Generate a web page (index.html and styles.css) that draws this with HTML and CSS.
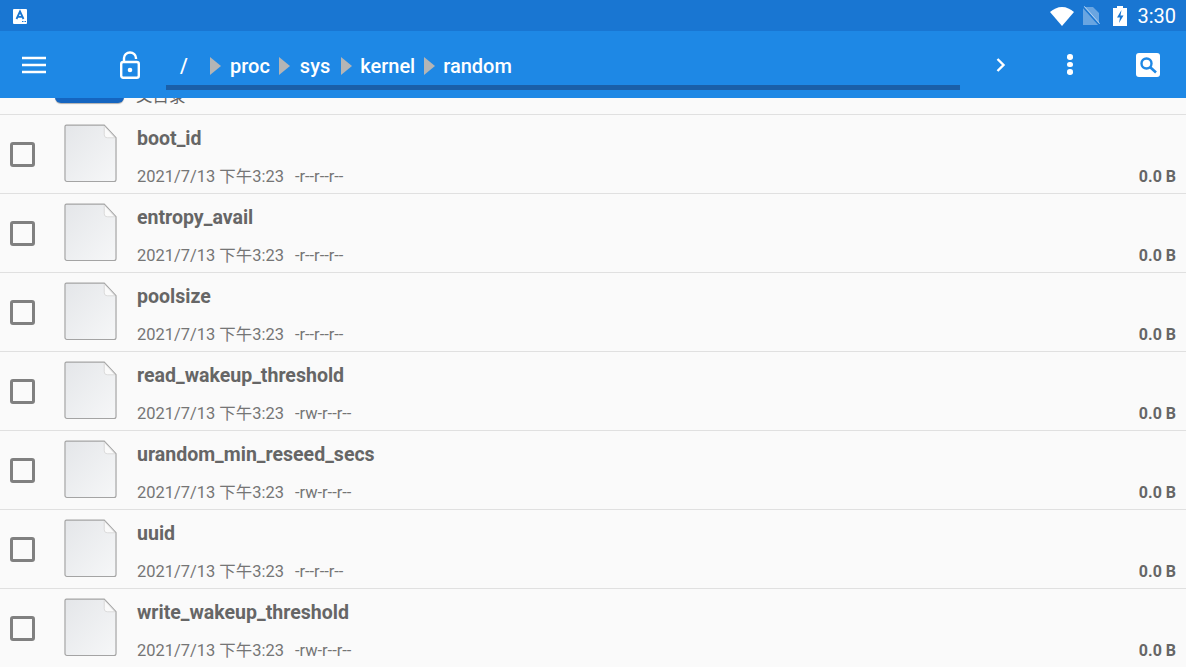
FILE: index.html

```html
<!DOCTYPE html>
<html lang="zh">
<head>
    <meta charset="UTF-8" />
    <meta name="viewport" content="width=device-width, initial-scale=1" />
    <title>random</title>
    <link rel="stylesheet" href="styles.css">
</head>
<body>
    <div class="status-bar">
        <svg class="app-icon" width="16" height="16" viewBox="0 0 16 16">
            <rect x="1" y="1" width="14" height="15" rx="1" fill="#fff"/>
            <path d="M4.500 11 8 3.500l3.500 7.500M5.700 8.800h4.600" fill="none" stroke="#1976d2" stroke-width="1.800"/>
            <path d="M10 13.500h4" stroke="#1976d2" stroke-width="1" stroke-dasharray="1 .5"/>
        </svg>
        <div class="status-right">
            <svg width="24" height="20" viewBox="0 0 24 20"><path d="M0 6C3.500 3 7.500 1 12 1s8.500 2 12 5L12 20z" fill="#fff"/></svg>
            <svg class="sim-icon" width="18" height="20" viewBox="0 0 18 20">
                <path d="M1 1h10l6 6v12H1z" fill="#fff" opacity="0.35"/>
                <path d="M1 1 18 20" stroke="#1976d2" stroke-width="1.500"/>
                <path d="M2 0 18.500 18.500" stroke="#fff" stroke-width="1" opacity="0.5"/>
            </svg>
            <svg class="battery-icon" width="14" height="20" viewBox="0 0 14 20">
                <path d="M4 0h6v2h4v18H0V2h4z" fill="#fff"/>
                <path d="M8.500 4 4 11.500h3L6 17l4.500-7.500h-3z" fill="#1976d2"/>
            </svg>
            <span class="clock">3:30</span>
        </div>
    </div>

    <div class="toolbar">
        <svg class="menu-icon" width="24" height="18" viewBox="0 0 24 18">
            <path d="M0 2h24M0 9h24M0 16h24" stroke="#fff" stroke-width="2.600"/>
        </svg>
        <svg class="lock-icon" width="22" height="28" viewBox="0 0 22 28">
            <rect x="2.200" y="11" width="17.600" height="15.800" rx="2" fill="none" stroke="#fff" stroke-width="2.400"/>
            <path d="M5 11V7a6 5.500 0 0 1 12 0v1" fill="none" stroke="#fff" stroke-width="2.400"/>
            <circle cx="11" cy="19" r="2.300" fill="#fff"/>
        </svg>
        <div class="crumbs">
            <span class="crumb root">/</span>
            <span class="sep"></span>
            <span class="crumb proc">proc</span>
            <span class="sep"></span>
            <span class="crumb sys">sys</span>
            <span class="sep"></span>
            <span class="crumb">kernel</span>
            <span class="sep"></span>
            <span class="crumb">random</span>
        </div>
        <svg class="chevron" width="12" height="16" viewBox="0 0 12 16">
            <path d="M2.500 2 8.500 8l-6 6" fill="none" stroke="#fff" stroke-width="2.400"/>
        </svg>
        <div class="dots"><i></i><i></i><i></i></div>
        <svg class="search-icon" width="24" height="24" viewBox="0 0 24 24">
            <rect width="24" height="24" rx="3" fill="#fff"/>
            <circle cx="10.500" cy="10.500" r="5" fill="none" stroke="#1e88e5" stroke-width="2.400"/>
            <path d="m14 14 6 5.500" stroke="#1e88e5" stroke-width="2.600"/>
        </svg>
    </div>

    <div class="list">
        <div class="row-cut">
            <div class="folder"></div>
            <span class="cut-text">父目录</span>
        </div>

        <div class="row">
            <span class="check"></span>
            <svg class="file" width="53" height="59" viewBox="0 0 54 60"><use href="#file-shape"/></svg>
            <div class="info">
                <div class="name">boot_id</div>
                <div class="meta"><span>2021/7/13 下午3:23</span><span class="perm">-r--r--r--</span><span class="size">0.0 B</span></div>
            </div>
        </div>
        <div class="row">
            <span class="check"></span>
            <svg class="file" width="53" height="59" viewBox="0 0 54 60"><use href="#file-shape"/></svg>
            <div class="info">
                <div class="name">entropy_avail</div>
                <div class="meta"><span>2021/7/13 下午3:23</span><span class="perm">-r--r--r--</span><span class="size">0.0 B</span></div>
            </div>
        </div>
        <div class="row">
            <span class="check"></span>
            <svg class="file" width="53" height="59" viewBox="0 0 54 60"><use href="#file-shape"/></svg>
            <div class="info">
                <div class="name">poolsize</div>
                <div class="meta"><span>2021/7/13 下午3:23</span><span class="perm">-r--r--r--</span><span class="size">0.0 B</span></div>
            </div>
        </div>
        <div class="row">
            <span class="check"></span>
            <svg class="file" width="53" height="59" viewBox="0 0 54 60"><use href="#file-shape"/></svg>
            <div class="info">
                <div class="name">read_wakeup_threshold</div>
                <div class="meta"><span>2021/7/13 下午3:23</span><span class="perm">-rw-r--r--</span><span class="size">0.0 B</span></div>
            </div>
        </div>
        <div class="row">
            <span class="check"></span>
            <svg class="file" width="53" height="59" viewBox="0 0 54 60"><use href="#file-shape"/></svg>
            <div class="info">
                <div class="name">urandom_min_reseed_secs</div>
                <div class="meta"><span>2021/7/13 下午3:23</span><span class="perm">-rw-r--r--</span><span class="size">0.0 B</span></div>
            </div>
        </div>
        <div class="row">
            <span class="check"></span>
            <svg class="file" width="53" height="59" viewBox="0 0 54 60"><use href="#file-shape"/></svg>
            <div class="info">
                <div class="name">uuid</div>
                <div class="meta"><span>2021/7/13 下午3:23</span><span class="perm">-r--r--r--</span><span class="size">0.0 B</span></div>
            </div>
        </div>
        <div class="row">
            <span class="check"></span>
            <svg class="file" width="53" height="59" viewBox="0 0 54 60"><use href="#file-shape"/></svg>
            <div class="info">
                <div class="name">write_wakeup_threshold</div>
                <div class="meta"><span>2021/7/13 下午3:23</span><span class="perm">-rw-r--r--</span><span class="size">0.0 B</span></div>
            </div>
        </div>
    </div>

    <svg class="defs" width="0" height="0">
        <defs>
            <linearGradient id="file-fill" x1="0" y1="0" x2="1" y2="1">
                <stop offset="0" stop-color="#e4e6e9"/>
                <stop offset="1" stop-color="#f6f7f8"/>
            </linearGradient>
            <g id="file-shape">
                <path d="M2.500 1h38.500L53 14v42.500a2 2 0 0 1-2 2H3a2 2 0 0 1-2-2V2.500A1.500 1.500 0 0 1 2.500 1z" fill="url(#file-fill)" stroke="#a4a4a4" stroke-width="1.200"/>
                <path d="M41 2v9a3 3 0 0 0 3 3h8z" fill="#fafafa" stroke="#dadada"/>
            </g>
        </defs>
    </svg>
</body>
</html>
```

FILE: styles.css

```css
html, body { margin: 0; padding: 0; height: 667px; overflow: hidden; }
body { font-family: Roboto, "Noto Sans CJK SC", sans-serif; background: #fafafa; width: 1186px; }
svg { display: block; flex: none; }
.defs { position: absolute; }

.status-bar { height: 31px; background: #1976d2; display: flex; align-items: center; justify-content: space-between; padding: 0 10px 0 12px; box-sizing: border-box; }
.status-right { display: flex; align-items: center; }
.sim-icon { margin-left: 8px; }
.battery-icon { margin-left: 13px; }
.clock { color: #fff; font-size: 20px; margin-left: 10px; }

.toolbar { height: 67px; background: #1e88e5; display: flex; align-items: center; box-sizing: border-box; }
.menu-icon { margin-left: 22px; }
.lock-icon { margin-left: 73px; margin-top: 1px; }
.crumbs { width: 794px; height: 48px; margin-left: 25px; margin-top: 3px; box-sizing: border-box; padding: 5px 0 0 14px; border-bottom: 5px solid #1a5fa8; display: flex; align-items: center; }
.crumb { color: #fff; font-size: 20px; font-weight: 500; }
.root { width: 21px; }
.proc { margin-left: 1px; }
.sys { margin: 0 2px; }
.sep { width: 0; height: 0; border-left: 11px solid #b5b5b5; border-top: 9px solid transparent; border-bottom: 9px solid transparent; margin: 0 8px 0 9px; }
.chevron { margin-left: 35px; }
.dots { margin-left: 60px; display: flex; flex-direction: column; gap: 2px; }
.dots i { display: block; width: 5.500px; height: 5.500px; border-radius: 50%; background: #fff; }
.search-icon { margin-left: 63px; }

.list { height: 569px; overflow: hidden; }
.row-cut { height: 17px; box-sizing: border-box; border-bottom: 1px solid #e0e0e0; overflow: hidden; position: relative; }
.folder { width: 69px; height: 20px; margin-left: 55px; margin-top: -15px; background: #1565c0; border-radius: 0 0 6px 6px; box-shadow: 0 1px 1px rgba(0,0,0,0.3); }
.cut-text { position: absolute; left: 136px; top: -15px; font-size: 16.500px; color: #666; }

.row { height: 79px; box-sizing: border-box; border-bottom: 1px solid #e0e0e0; display: flex; align-items: center; }
.check { flex: none; width: 19px; height: 19px; border: 3px solid #808080; border-radius: 3px; margin-left: 10px; }
.file { margin-left: 29px; margin-bottom: 2px; }
.info { flex: 1; margin-left: 20px; padding-right: 10px; margin-top: 5px; }
.name { font-size: 19.550px; font-weight: 700; color: #666; line-height: 24px; }
.meta { display: flex; font-size: 16.450px; color: #757575; line-height: 20px; margin-top: 16px; }
.perm { margin-left: 11px; }
.size { margin-left: auto; font-size: 16px; font-weight: 700; color: #666; }
```
